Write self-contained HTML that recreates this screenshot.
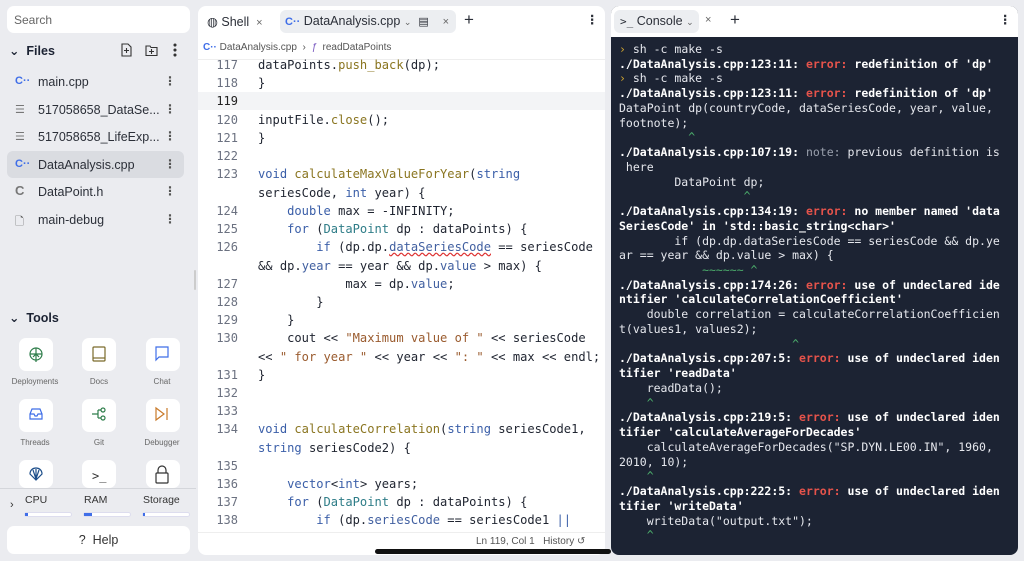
<!DOCTYPE html>
<html><head><meta charset="utf-8"><style>
*{box-sizing:border-box;margin:0;padding:0}
body{width:1024px;height:561px;overflow:hidden;background:#ebecf0;font-family:"Liberation Sans","DejaVu Sans",sans-serif;position:relative;color:#1c2333}
.abs{position:absolute}
.side{left:0;top:0;width:196px;height:561px}
.search{left:7px;top:6px;width:183px;height:27px;background:#fff;border-radius:7px;font-size:12px;color:#666;padding:7px 7px}
.hdr{font-size:12.5px;font-weight:bold;color:#1c2333}
.file{left:7px;width:177px;height:27px;font-size:12.5px;color:#2b2f38;padding:7px 0 0 31px;border-radius:6px}
.file .ic{position:absolute;left:8px;top:7px;font-size:11px;font-weight:bold;color:#3f6ee8}
.dots{position:absolute;right:8px;top:6px;color:#555;font-size:12px;font-weight:bold}
.tool{width:34px;height:33px;background:#fff;border-radius:7px}
.tl{font-size:8px;color:#666;text-align:center;width:70px}
.panel{background:#fff;border-radius:8px;overflow:hidden}
.mono{font-family:"DejaVu Sans Mono","Liberation Mono",monospace}
.code .ln{position:absolute;width:40px;text-align:right;left:0;color:#6b7180;font-size:12px}
.code .tx{position:absolute;left:60px;font-size:12.1px;white-space:pre;color:#1f2430}
.k{color:#3a5ea8}.f{color:#8a7520}.t{color:#2f7d88}.s{color:#9a5b2e}.m{color:#405fa0}
.con{font-size:11.5px;line-height:14.73px;color:#e6e8ee;white-space:pre}
.con b{color:#fff}
.er{color:#e5534b}.nt{color:#9aa0ad}.gr{color:#4cae6c}
</style></head><body>
<div class="abs side">
 <div class="abs search">Search</div>
 <div class="abs hdr" style="left:9px;top:43px">⌄&nbsp; Files</div>
 <svg class="abs" style="left:120px;top:43px" width="70" height="14" viewBox="0 0 70 14" fill="none" stroke="#333" stroke-width="1.1"><path d="M2 1h6l3 3v9H2z M6.5 5v5 M4 7.5h5"/><path d="M26 3h4l1 1.5h6v8H26z M31.5 6v5 M29 8.5h5"/><circle cx="55" cy="2" r="1" fill="#333"/><circle cx="55" cy="7" r="1" fill="#333"/><circle cx="55" cy="12" r="1" fill="#333"/></svg>
 <div class="abs file" style="top:68px"><span class="ic">C··</span>main.cpp<span class="dots">⋮</span></div>
 <div class="abs file" style="top:96px"><span class="ic" style="color:#777;font-weight:normal">☰</span>517058658_DataSe...<span class="dots">⋮</span></div>
 <div class="abs file" style="top:123px"><span class="ic" style="color:#777;font-weight:normal">☰</span>517058658_LifeExp...<span class="dots">⋮</span></div>
 <div class="abs file" style="top:151px;background:#dadce1"><span class="ic">C··</span>DataAnalysis.cpp<span class="dots">⋮</span></div>
 <div class="abs file" style="top:178px"><span class="ic" style="color:#777;font-size:13px;top:5px">C</span>DataPoint.h<span class="dots">⋮</span></div>
 <div class="abs file" style="top:206px"><span class="ic" style="color:#555;font-weight:normal">🗋</span>main-debug<span class="dots">⋮</span></div>
 <div class="abs hdr" style="left:9px;top:310px">⌄&nbsp; Tools</div>
 <div class="abs tool" style="left:19px;top:338px"></div><div class="abs tool" style="left:82px;top:338px"></div><div class="abs tool" style="left:146px;top:338px"></div>
 <div class="abs tool" style="left:19px;top:399px"></div><div class="abs tool" style="left:82px;top:399px"></div><div class="abs tool" style="left:146px;top:399px"></div>
 <div class="abs tool" style="left:19px;top:460px;height:28px"></div><div class="abs tool" style="left:82px;top:460px;height:28px"></div><div class="abs tool" style="left:146px;top:460px;height:28px"></div>
 <svg class="abs" style="left:0;top:338px" width="196" height="152" fill="none" stroke-width="1.2">
  <g stroke="#2e7d4a"><circle cx="36" cy="16" r="6"/><path d="M30 16h12M36 10v14M33 19l3-3 3 3"/></g>
  <g stroke="#7a6a2a"><rect x="93" y="9" width="12" height="14" rx="1"/><path d="M93 20h12"/></g>
  <g stroke="#3f6ee8"><path d="M156 9h12v10h-9l-3 3z"/></g>
  <g stroke="#3f6ee8"><path d="M30 76l2-5h8l2 5v5H30z M30 76h4l1 2h2l1-2h4"/></g>
  <g stroke="#2e7d4a"><path d="M92 76h6M98 72v8M98 72h3M98 80h3"/><circle cx="103" cy="72" r="2"/><circle cx="103" cy="80" r="2"/></g>
  <g stroke="#c97a2a"><path d="M156 70v12l8-6z M167 70v12"/></g>
  <g stroke="#1c4e8a"><path d="M30 136l6 6 6-6c0-4-3-6-6-6s-6 2-6 6z M36 131v10M33 132l3 9 3-9"/></g>
  <text x="92" y="142" font-size="12" fill="#333" stroke="none" font-family="DejaVu Sans Mono">&gt;_</text>
  <g stroke="#333"><rect x="156" y="135" width="12" height="10" rx="1"/><path d="M158 135v-3a4 4 0 018 0v3"/></g>
 </svg>
 <div class="abs tl" style="left:0;top:377px">Deployments</div><div class="abs tl" style="left:64px;top:377px">Docs</div><div class="abs tl" style="left:127px;top:377px">Chat</div>
 <div class="abs tl" style="left:0;top:438px">Threads</div><div class="abs tl" style="left:64px;top:438px">Git</div><div class="abs tl" style="left:127px;top:438px">Debugger</div>
 <div class="abs" style="left:0;top:488px;width:196px;height:1px;background:#d4d6db"></div>
 <div class="abs" style="left:10px;top:499px;font-size:11px;color:#333">›</div>
 <div class="abs" style="left:25px;top:494px;font-size:10.5px;color:#333">CPU</div>
 <div class="abs" style="left:84px;top:494px;font-size:10.5px;color:#333">RAM</div>
 <div class="abs" style="left:143px;top:494px;font-size:10.5px;color:#333">Storage</div>
 <div class="abs" style="left:24px;top:512px;width:48px;height:5px;background:#fff;border-radius:3px;border:1px solid #dde"><div style="width:3px;height:3px;background:#3f6ee8"></div></div>
 <div class="abs" style="left:83px;top:512px;width:48px;height:5px;background:#fff;border-radius:3px;border:1px solid #dde"><div style="width:8px;height:3px;background:#3f6ee8"></div></div>
 <div class="abs" style="left:142px;top:512px;width:48px;height:5px;background:#fff;border-radius:3px;border:1px solid #dde"><div style="width:2px;height:3px;background:#3f6ee8"></div></div>
 <div class="abs" style="left:7px;top:526px;width:183px;height:28px;background:#fff;border-radius:7px;font-size:12.5px;color:#333;text-align:center;padding-top:7px">?&nbsp; Help</div>
</div>
<div class="abs" style="left:194px;top:270px;width:2px;height:20px;background:#ccc;border-radius:1px"></div>

<div class="abs panel" style="left:198px;top:6px;width:407px;height:549px">
 <div class="abs" style="left:0;top:0;width:407px;height:29px;font-size:12.5px;color:#2b2f38">
  <span class="abs" style="left:9px;top:8px">◍ Shell&nbsp;&nbsp;<span style="color:#666;font-size:11px">×</span></span>
  <div class="abs" style="left:82px;top:4px;width:176px;height:23px;background:#eceef1;border-radius:6px"></div>
  <span class="abs" style="left:87px;top:8px"><b style="color:#3f6ee8;font-size:11px">C··</b> DataAnalysis.cpp <span style="font-size:9px;color:#666">⌄</span>&nbsp; <span style="font-size:11px">▤</span>&nbsp;&nbsp;&nbsp; <span style="color:#666;font-size:11px">×</span></span>
  <span class="abs" style="left:266px;top:4px;font-size:17px">+</span>
  <span class="abs" style="left:388px;top:6px;font-weight:bold">⋮</span>
 </div>
 <div class="abs" style="left:5px;top:36px;font-size:10px;color:#555"><b style="color:#3f6ee8">C··</b> DataAnalysis.cpp &nbsp;›&nbsp; <i style="color:#7a5ac0">ƒ</i>&nbsp; readDataPoints</div>
 <div class="abs" style="left:0;top:53px;width:407px;height:1px;background:#eee"></div>
 <div class="abs" style="left:0;top:86px;width:407px;height:18px;background:#f3f4f6"></div>
 <div class="abs" style="left:0;top:526px;width:407px;height:1px;background:#eee"></div>
 <div class="abs" style="left:278px;top:530px;font-size:10px;color:#555">Ln 119, Col 1 &nbsp; History ↺</div>
 <div class="abs code mono" style="left:0;top:0">
  <div class="ln" style="top:52px">117</div><div class="tx" style="top:52px">dataPoints.<span class="f">push_back</span>(dp);</div>
  <div class="ln" style="top:70px">118</div><div class="tx" style="top:70px">}</div>
  <div class="ln" style="top:88px;color:#222">119</div>
  <div class="ln" style="top:107px">120</div><div class="tx" style="top:107px">inputFile.<span class="f">close</span>();</div>
  <div class="ln" style="top:125px">121</div><div class="tx" style="top:125px">}</div>
  <div class="ln" style="top:143px">122</div>
  <div class="ln" style="top:161px">123</div><div class="tx" style="top:161px"><span class="k">void</span> <span class="f">calculateMaxValueForYear</span>(<span class="k">string</span></div>
  <div class="tx" style="top:180px">seriesCode, <span class="k">int</span> year) {</div>
  <div class="ln" style="top:198px">124</div><div class="tx" style="top:198px">    <span class="k">double</span> max = -INFINITY;</div>
  <div class="ln" style="top:216px">125</div><div class="tx" style="top:216px">    <span class="k">for</span> (<span class="t">DataPoint</span> dp : dataPoints) {</div>
  <div class="ln" style="top:234px">126</div><div class="tx" style="top:234px">        <span class="k">if</span> (dp.dp.<span class="m" style="text-decoration:underline wavy #d33">dataSeriesCode</span> == seriesCode</div>
  <div class="tx" style="top:253px">&amp;&amp; dp.<span class="m">year</span> == year &amp;&amp; dp.<span class="m">value</span> &gt; max) {</div>
  <div class="ln" style="top:271px">127</div><div class="tx" style="top:271px">            max = dp.<span class="m">value</span>;</div>
  <div class="ln" style="top:289px">128</div><div class="tx" style="top:289px">        }</div>
  <div class="ln" style="top:307px">129</div><div class="tx" style="top:307px">    }</div>
  <div class="ln" style="top:325px">130</div><div class="tx" style="top:325px">    cout &lt;&lt; <span class="s">"Maximum value of "</span> &lt;&lt; seriesCode</div>
  <div class="tx" style="top:344px">&lt;&lt; <span class="s">" for year "</span> &lt;&lt; year &lt;&lt; <span class="s">": "</span> &lt;&lt; max &lt;&lt; endl;</div>
  <div class="ln" style="top:362px">131</div><div class="tx" style="top:362px">}</div>
  <div class="ln" style="top:380px">132</div>
  <div class="ln" style="top:398px">133</div>
  <div class="ln" style="top:416px">134</div><div class="tx" style="top:416px"><span class="k">void</span> <span class="f">calculateCorrelation</span>(<span class="k">string</span> seriesCode1,</div>
  <div class="tx" style="top:435px"><span class="k">string</span> seriesCode2) {</div>
  <div class="ln" style="top:453px">135</div>
  <div class="ln" style="top:471px">136</div><div class="tx" style="top:471px">    <span class="k">vector</span>&lt;<span class="k">int</span>&gt; years;</div>
  <div class="ln" style="top:489px">137</div><div class="tx" style="top:489px">    <span class="k">for</span> (<span class="t">DataPoint</span> dp : dataPoints) {</div>
  <div class="ln" style="top:507px">138</div><div class="tx" style="top:507px">        <span class="k">if</span> (dp.<span class="m">seriesCode</span> == seriesCode1 <span class="k">||</span></div>
 </div>
</div>

<div class="abs panel" style="left:611px;top:6px;width:407px;height:549px;background:#1c2333">
 <div class="abs" style="left:0;top:0;width:407px;height:31px;background:#fff;font-size:12.5px;color:#2b2f38">
  <div class="abs" style="left:3px;top:4px;width:85px;height:23px;background:#eceef1;border-radius:6px"></div>
  <span class="abs" style="left:9px;top:8px"><span class="mono" style="font-size:11px">&gt;_</span> Console <span style="font-size:9px;color:#666">⌄</span></span>
  <span class="abs" style="left:94px;top:8px;color:#666;font-size:11px">×</span>
  <span class="abs" style="left:119px;top:4px;font-size:17px">+</span>
  <span class="abs" style="left:388px;top:6px;font-weight:bold">⋮</span>
 </div>
 <div class="abs con mono" style="left:8px;top:36px"><span style="color:#c9a030">›</span> sh -c make -s
<b>./DataAnalysis.cpp:123:11: <span class="er">error:</span> redefinition of 'dp'</b>
<span style="color:#c9a030">›</span> sh -c make -s
<b>./DataAnalysis.cpp:123:11: <span class="er">error:</span> redefinition of 'dp'</b>
DataPoint dp(countryCode, dataSeriesCode, year, value,
footnote);
<span class="gr">          ^</span>
<b>./DataAnalysis.cpp:107:19: </b><span class="nt">note:</span> previous definition is
 here
        DataPoint dp;
<span class="gr">                  ^</span>
<b>./DataAnalysis.cpp:134:19: <span class="er">error:</span> no member named 'data
SeriesCode' in 'std::basic_string&lt;char&gt;'</b>
        if (dp.dp.dataSeriesCode == seriesCode &amp;&amp; dp.ye
ar == year &amp;&amp; dp.value &gt; max) {
<span class="gr">            ~~~~~~ ^</span>
<b>./DataAnalysis.cpp:174:26: <span class="er">error:</span> use of undeclared ide
ntifier 'calculateCorrelationCoefficient'</b>
    double correlation = calculateCorrelationCoefficien
t(values1, values2);
<span class="gr">                         ^</span>
<b>./DataAnalysis.cpp:207:5: <span class="er">error:</span> use of undeclared iden
tifier 'readData'</b>
    readData();
<span class="gr">    ^</span>
<b>./DataAnalysis.cpp:219:5: <span class="er">error:</span> use of undeclared iden
tifier 'calculateAverageForDecades'</b>
    calculateAverageForDecades("SP.DYN.LE00.IN", 1960,
2010, 10);
<span class="gr">    ^</span>
<b>./DataAnalysis.cpp:222:5: <span class="er">error:</span> use of undeclared iden
tifier 'writeData'</b>
    writeData("output.txt");
<span class="gr">    ^</span></div>
</div>
<div class="abs" style="left:375px;top:549px;width:236px;height:5px;background:#111;border-radius:3px"></div>
</body></html>
